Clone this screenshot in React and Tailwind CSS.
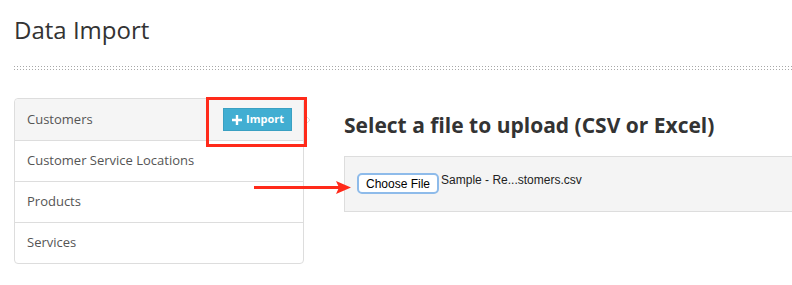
import React from "react";

export default function App() {
  const items = ["Customers", "Customer Service Locations", "Products", "Services"];
  return (
    <div className="relative w-[792px] h-[285px] overflow-hidden bg-white font-['Open_Sans',sans-serif] text-[#333]">
      <div className="pl-[14px] pt-[14px]">
        <h1 className="text-[24px] leading-[32px] text-[#333] font-normal">Data Import</h1>
        <div className="mt-[20px] flex flex-col gap-[2px]">
          <div className="h-[1px] bg-[linear-gradient(to_right,#a8a8a8_1px,transparent_1px)] bg-[length:3px_1px]" />
          <div className="h-[1px] bg-[linear-gradient(to_right,#a8a8a8_1px,transparent_1px)] bg-[length:3px_1px]" />
        </div>
        <div className="mt-[28px] flex">
          <div className="relative w-[290px] shrink-0 border border-[#ddd] rounded-[4px]">
            {items.map((it, i) => (
              <div
                key={it}
                className={`flex items-center justify-between h-[41px] pl-[12px] pr-[11px] text-[13px] text-[#555] ${i > 0 ? "border-t border-[#ddd]" : "bg-[#f5f5f5] rounded-t-[4px] h-[40px]"}`}
              >
                <span>{it}</span>
                {i === 0 && (
                  <button className="flex items-center justify-center gap-[3px] w-[69px] h-[23px] bg-[#41aed2] border border-[#3aa0c2] text-white text-[11px] font-bold">
                    <svg width="12" height="12" viewBox="0 0 12 12">
                      <path d="M6 1v10M1 6h10" stroke="white" strokeWidth="2.4" />
                    </svg>
                    Import
                  </button>
                )}
              </div>
            ))}
            <svg className="absolute left-[289px] top-[15px]" width="7" height="12" viewBox="0 0 7 12">
              <path d="M0 0 L6 6 L0 12" fill="white" stroke="#ddd" strokeWidth="1" />
            </svg>
          </div>
          <div className="ml-[40px] flex-1">
            <h2 className="mt-[13px] text-[21px] leading-[29px] font-bold text-[#333] whitespace-nowrap">
              Select a file to upload (CSV or Excel)
            </h2>
            <div className="mt-[16px] h-[56px] bg-[#f4f4f4] border-y border-l border-[#ddd] pl-[12px] pt-[16px] flex items-start font-['Liberation_Sans',Arial,sans-serif]">
              <button className="h-[21px] px-[7px] bg-white border-[2px] border-[#8ebbea] rounded-[5px] text-[12px] text-black leading-none">
                Choose File
              </button>
              <span className="ml-[2px] -mt-[1px] text-[12px] text-[#222] leading-[16px]">Sample - Re...stomers.csv</span>
            </div>
          </div>
        </div>
      </div>
      {/* annotations */}
      <div className="absolute left-[206px] top-[97px] w-[101px] h-[50px] border-[3px] border-[#ff2a1a]" />
      <div className="absolute left-[254px] top-[186px] w-[86px] h-[3px] bg-[#ff2a1a]" />
      <svg className="absolute left-[336px] top-[181px]" width="16" height="13" viewBox="0 0 16 13">
        <path d="M0 0 L15 6.5 L0 13 L3 6.5 Z" fill="#ff2a1a" />
      </svg>
    </div>
  );
}
